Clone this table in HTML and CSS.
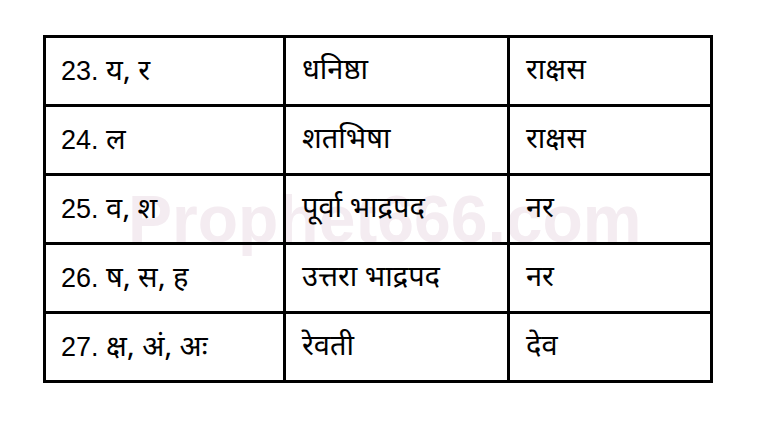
FILE: index.html
```html
<!DOCTYPE html>
<html lang="hi">
<head>
<meta charset="utf-8">
<title>Nakshatra table</title>
<link rel="stylesheet" href="styles.css">
</head>
<body>
<div class="page">
  <div class="watermark">Prophet666.com</div>
  <div class="grid">
    <div class="cell"><span class="txt">23. <span class="dev">य, र</span></span></div>
    <div class="cell"><span class="txt dev">धनिष्ठा</span></div>
    <div class="cell"><span class="txt dev">राक्षस</span></div>
    <div class="cell"><span class="txt">24. <span class="dev">ल</span></span></div>
    <div class="cell"><span class="txt dev">शतभिषा</span></div>
    <div class="cell"><span class="txt dev">राक्षस</span></div>
    <div class="cell"><span class="txt">25. <span class="dev">व, श</span></span></div>
    <div class="cell"><span class="txt dev">पूर्वा भाद्रपद</span></div>
    <div class="cell"><span class="txt dev">नर</span></div>
    <div class="cell"><span class="txt">26. <span class="dev">ष, स, ह</span></span></div>
    <div class="cell"><span class="txt dev">उत्तरा भाद्रपद</span></div>
    <div class="cell"><span class="txt dev">नर</span></div>
    <div class="cell"><span class="txt">27. <span class="dev">क्ष, अं, अः</span></span></div>
    <div class="cell"><span class="txt dev">रेवती</span></div>
    <div class="cell"><span class="txt dev">देव</span></div>
  </div>
</div>
</body>
</html>
```
FILE: styles.css
```css
* { box-sizing: border-box; }
html, body { margin: 0; padding: 0; background: #fff; }
body { width: 768px; height: 428px; overflow: hidden; }
.page {
  position: relative;
  padding: 35px 0 0 43px;
  font-family: "Liberation Sans", Arial, sans-serif;
  color: #000;
}
.watermark {
  position: absolute;
  left: 128px;
  top: 186px;
  font-size: 66px;
  line-height: 1;
  font-weight: bold;
  color: #f4ecf1;
  white-space: nowrap;
  z-index: 0;
}
.grid {
  position: relative;
  z-index: 1;
  display: grid;
  grid-template-columns: 240px 224px 203px;
  grid-auto-rows: 69px;
  width: 670px;
  border-top: 3px solid #000;
  border-left: 3px solid #000;
}
.cell {
  display: flex;
  align-items: center;
  padding: 2px 15px 0 15px;
  border-right: 3px solid #000;
  border-bottom: 3px solid #000;
  font-size: 27px;
  line-height: 30px;
  white-space: nowrap;
}
.txt { display: block; }
.dev {
  font-family: "Noto Sans Devanagari", "Lohit Devanagari", "Liberation Sans", sans-serif;
  font-size: 29px;
  line-height: 30px;
}
.txt.dev { padding-left: 1px; }
```
